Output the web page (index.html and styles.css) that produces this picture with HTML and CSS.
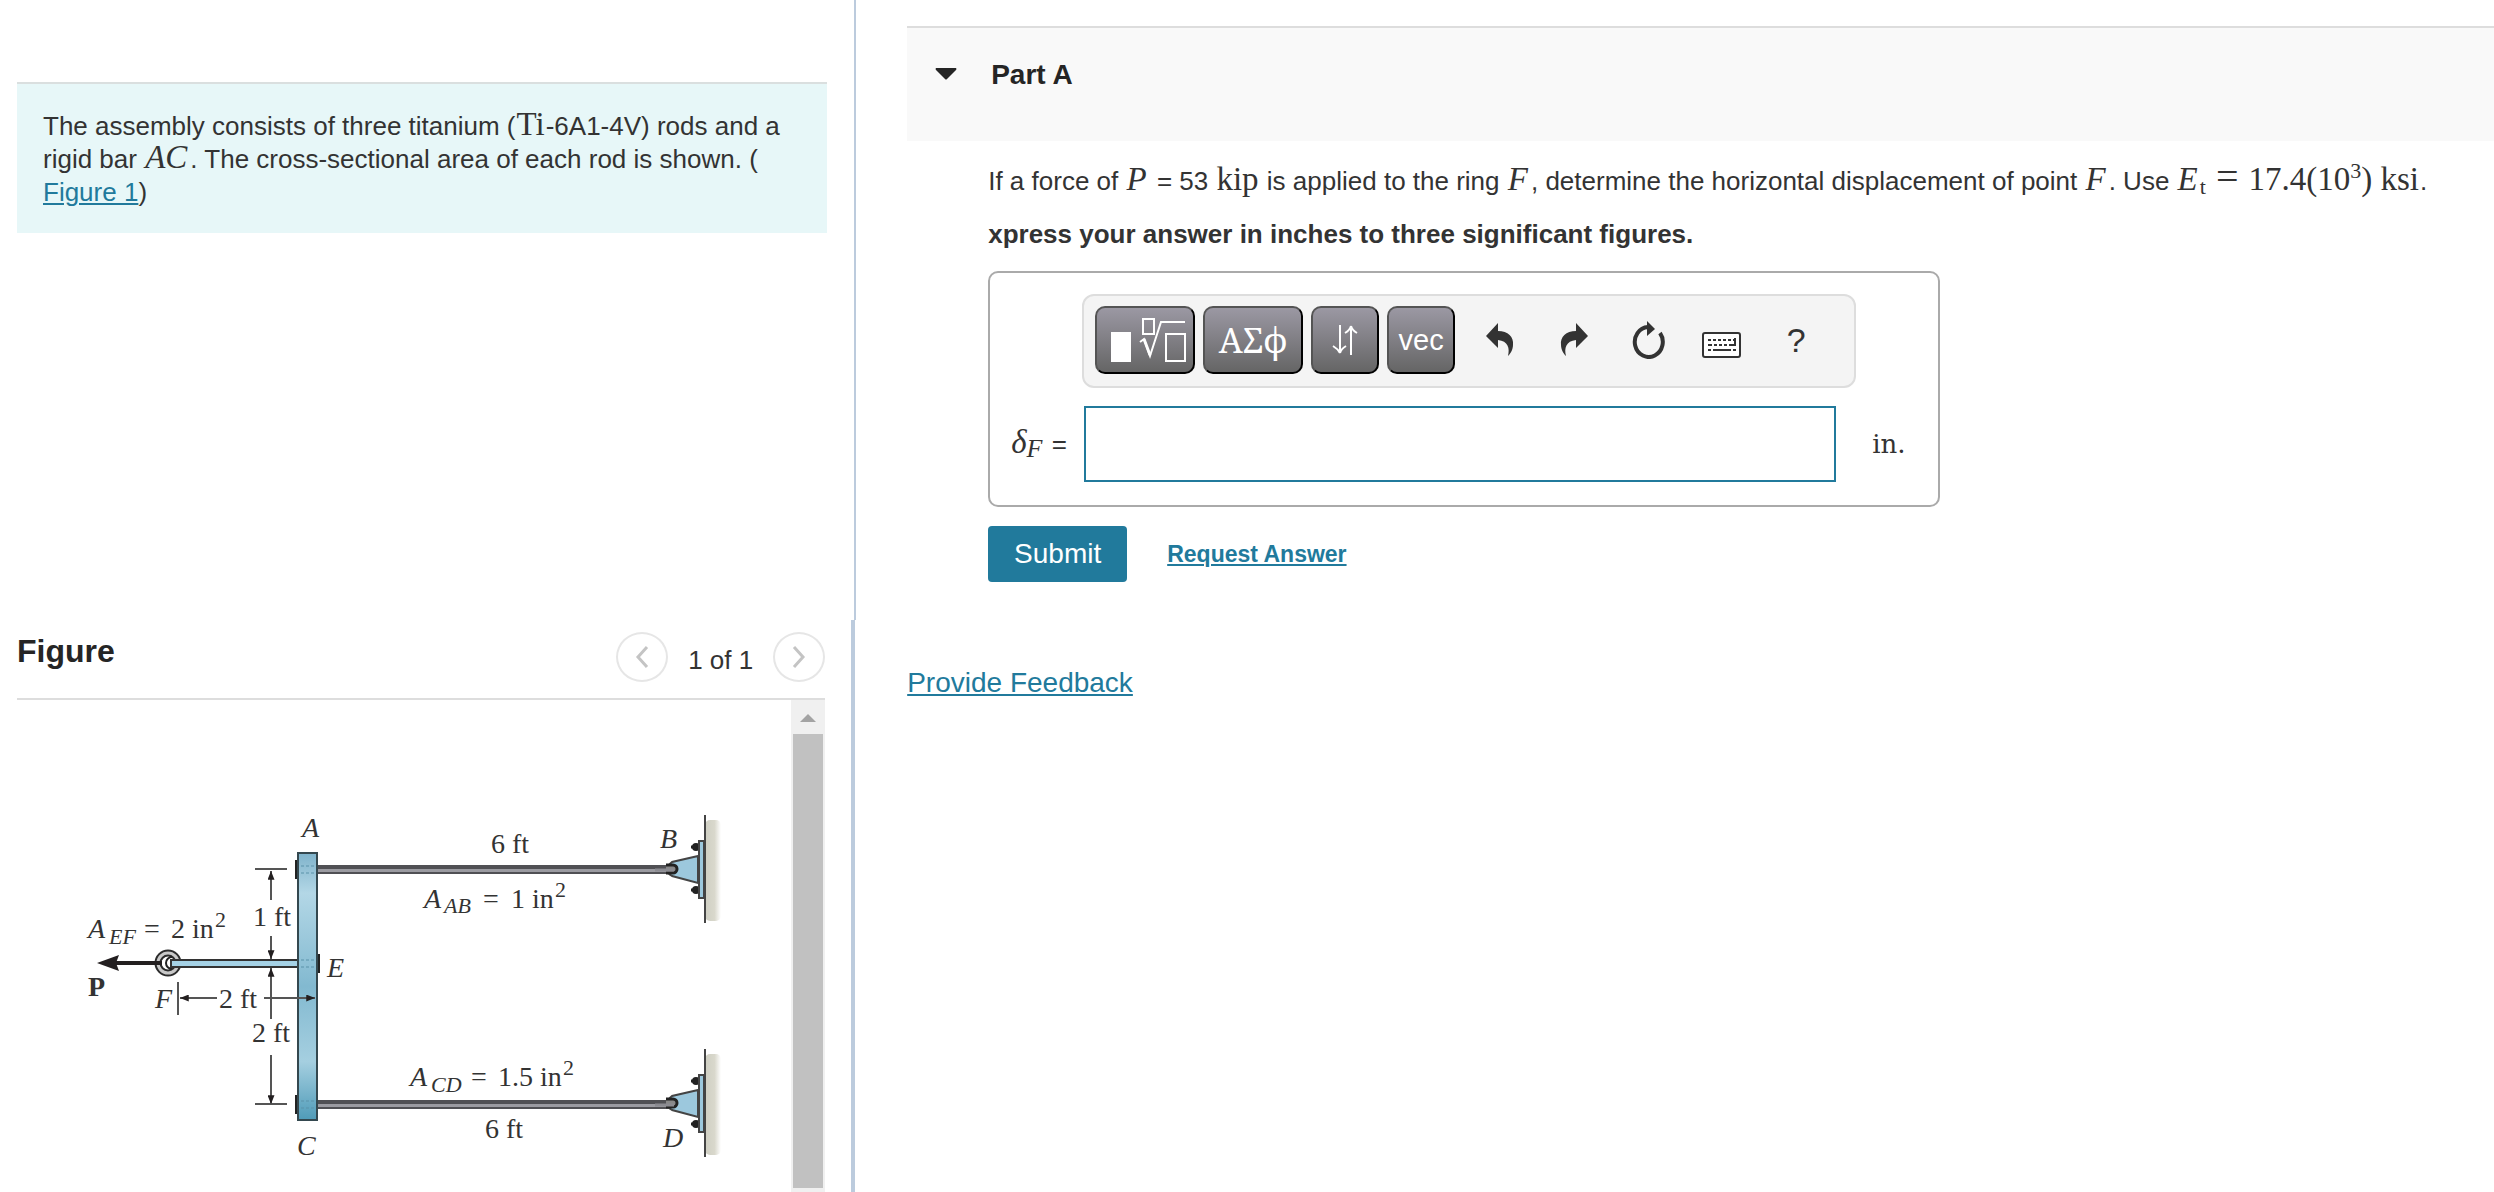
FILE: index.html
```html
<!DOCTYPE html>
<html lang="en">
<head>
    <meta charset="UTF-8">
    <meta name="viewport" content="width=device-width, initial-scale=1.0">
    <title>Part A - Axial Displacement</title>
    <link rel="stylesheet" href="styles.css">
</head>
<body>
    <aside class="left">
        <section class="intro">
            <p class="problem">The assembly consists of three titanium (<span class="math">Ti</span>-6A1-4V) rods and a rigid bar <span class="math"><i>AC</i></span>. The cross-sectional area of each rod is shown. (<br><a href="#figure">Figure 1</a>)</p>
        </section>

        <section class="figure" id="figure">
            <div class="figure-head">
                <h2>Figure</h2>
                <div class="pager">
                    <button aria-label="Previous figure"><svg width="14" height="22" viewBox="0 0 14 22"><path d="M12 1 L3 11 L12 21"/></svg></button>
                    <span>1 of 1</span>
                    <button aria-label="Next figure"><svg width="14" height="22" viewBox="0 0 14 22"><path d="M2 1 L11 11 L2 21"/></svg></button>
                </div>
            </div>
            <div class="figure-body">
                <svg class="drawing" viewBox="17 700 774 492" width="774" height="492">
                    <defs>
                        <linearGradient id="bar" x1="0" y1="0" x2="0" y2="1">
                            <stop offset="0" stop-color="#7fb3cb"/>
                            <stop offset="0.15" stop-color="#b3d7e6"/>
                            <stop offset="0.5" stop-color="#82b9d0"/>
                            <stop offset="0.78" stop-color="#a5cfe0"/>
                            <stop offset="1" stop-color="#4f9bb8"/>
                        </linearGradient>
                        <linearGradient id="wall">
                            <stop offset="0" stop-color="#cfcfc3"/>
                            <stop offset="0.6" stop-color="#d9d8cc"/>
                            <stop offset="1" stop-color="#fff"/>
                        </linearGradient>
                        <marker id="arrow" viewBox="0 0 10 8" markerWidth="10" markerHeight="7" refX="10" refY="4" orient="auto-start-reverse" markerUnits="userSpaceOnUse">
                            <path d="M0 0 L10 4 L0 8 Z" fill="#231f20"/>
                        </marker>
                        <g id="support">
                            <rect x="705" y="820" width="16" height="101" rx="5" fill="url(#wall)"/>
                            <path d="M705 815 V923" stroke="#444" stroke-width="2"/>
                            <circle cx="696" cy="847" r="4" fill="#222"/>
                            <circle cx="696" cy="890" r="4" fill="#222"/>
                            <path d="M691 847 H700 M691 890 H700" stroke="#222" stroke-width="3"/>
                            <rect x="699" y="841" width="5" height="57" fill="#9cc8dd" stroke="#444" stroke-width="2"/>
                            <path d="M698 856 L672 862 Q662 870 672 876 L698 883 Z" fill="#9cc8dd" stroke="#444" stroke-width="2"/>
                            <path d="M666 865 H673 A4 4 0 0 1 673 873 H666" fill="#888" stroke="#222" stroke-width="3"/>
                        </g>
                    </defs>

                    <!-- rods AB and CD -->
                    <g id="rods">
                        <rect x="317" y="865" width="354" height="9" fill="#505054"/>
                        <rect x="317" y="869" width="358" height="3" fill="#9b9ba1"/>
                        <rect x="317" y="1100" width="354" height="9" fill="#505054"/>
                        <rect x="317" y="1104" width="358" height="3" fill="#9b9ba1"/>
                    </g>
                    <use href="#support"/>
                    <use href="#support" y="234"/>
                    <path d="M655 870 H674 M655 1105 H674" stroke="#8b8b91" stroke-width="3"/>

                    <!-- ring F and rod EF -->
                    <circle cx="168" cy="963" r="10" fill="none" stroke="#2b2b2b" stroke-width="7"/>
                    <circle cx="168" cy="963" r="10" fill="none" stroke="#c8c8c8" stroke-width="3"/>
                    <path d="M172 957 A6 6 0 1 0 172 969" fill="#fff" stroke="#222" stroke-width="2"/>
                    <rect x="171" y="960" width="127" height="7" fill="#a5d2e6" stroke="#333" stroke-width="2"/>
                    <path d="M112 963 H162" stroke="#231f20" stroke-width="4"/>
                    <path d="M97 963 L119 955 L116 963 L119 971 Z" fill="#231f20"/>

                    <!-- rigid bar AC -->
                    <path d="M297 860 V879 M297 1095 V1114 M318 954 V973" stroke="#222" stroke-width="4"/>
                    <rect x="298" y="853" width="19" height="267" fill="url(#bar)" stroke="#34484f" stroke-width="2"/>
                    <path d="M301 866 H315 M301 873 H315 M301 960 H315 M301 967 H315 M301 1101 H315 M301 1108 H315" stroke="#5b93aa" stroke-width="1" stroke-dasharray="3 2"/>

                    <g class="dims">
                        <path d="M255 869 H287 M255 1104 H287 M178 982 V1015"/>
                        <path d="M271 900 V871" marker-end="url(#arrow)"/>
                        <path d="M271 936 V959" marker-end="url(#arrow)"/>
                        <path d="M271 1019 V968" marker-end="url(#arrow)"/>
                        <path d="M271 1055 V1104" marker-end="url(#arrow)"/>
                        <path d="M217 998 H180" marker-end="url(#arrow)"/>
                        <path d="M264 998 H315" marker-end="url(#arrow)"/>
                    </g>

                    <g class="labels">
                        <text x="302" y="837" class="it">A</text>
                        <text x="297" y="1155" class="it">C</text>
                        <text x="327" y="977" class="it">E</text>
                        <text x="155" y="1008" class="it">F</text>
                        <text x="660" y="848" class="it">B</text>
                        <text x="663" y="1147" class="it">D</text>
                        <text x="88" y="996" class="bold">P</text>
                        <text x="253" y="926">1 ft</text>
                        <text x="219" y="1008">2 ft</text>
                        <text x="252" y="1042">2 ft</text>
                        <text x="491" y="853">6 ft</text>
                        <text x="485" y="1138">6 ft</text>
                        <text x="88" y="938" class="it">A</text>
                        <text x="109" y="944" class="it sub">EF</text>
                        <text x="144" y="938">=</text>
                        <text x="171" y="938">2 in</text>
                        <text x="215" y="927" class="sub">2</text>
                        <text x="424" y="908" class="it">A</text>
                        <text x="444" y="913" class="it sub">AB</text>
                        <text x="483" y="908">=</text>
                        <text x="511" y="908">1 in</text>
                        <text x="555" y="897" class="sub">2</text>
                        <text x="410" y="1086" class="it">A</text>
                        <text x="431" y="1092" class="it sub">CD</text>
                        <text x="471" y="1086">=</text>
                        <text x="498" y="1086">1.5 in</text>
                        <text x="563" y="1075" class="sub">2</text>
                    </g>
                </svg>
                <div class="scrollbar">
                    <div class="up"></div>
                    <div class="thumb"></div>
                </div>
            </div>
        </section>
    </aside>

    <main class="right">
        <header class="part">
            <svg width="22" height="12" viewBox="0 0 22 12"><path d="M1 0 H21 Q22 1 21 2 L12 11 Q11 12 10 11 L1 2 Q0 1 1 0 Z" fill="#252525"/></svg>
            <h1>Part A</h1>
        </header>

        <section class="question">
            <p>If a force of <span class="math"><i>P</i></span> = 53 <span class="math">kip</span> is applied to the ring <span class="math"><i>F</i></span>, determine the horizontal displacement of point <span class="math"><i>F</i></span>. Use <span class="math"><i>E</i><sub>t</sub><span class="eq">=</span>17.4(10<sup>3</sup>) ksi</span>.</p>
            <p class="hint">xpress your answer in inches to three significant figures.</p>

            <form class="answer">
                <div class="toolbar">
                    <button type="button" class="key wide" aria-label="Templates">
                        <svg width="82" height="46" viewBox="-6 0 82 46">
                            <rect x="1" y="15" width="20" height="30" fill="#fff"/>
                            <g fill="none" stroke="#fff" stroke-width="2">
                                <rect x="33" y="2" width="11" height="15"/>
                                <rect x="56" y="17" width="19" height="27"/>
                                <path d="M30 25 L34 22 L40 39 L51 5 H75"/>
                                <path d="M34 22 L40 38" stroke-width="3"/>
                            </g>
                        </svg>
                    </button>
                    <button type="button" class="key wide greek">ΑΣϕ</button>
                    <button type="button" class="key" aria-label="Scripts">
                        <svg width="26" height="32" viewBox="0 0 26 32" fill="none" stroke="#fff" stroke-width="2"><path d="M8 1 V29 M1 22 Q6 25 8 29 M14 22 Q9 25 8 29 M19 31 V3 M13 9 Q18 6 19 2 M25 9 Q20 6 19 2"/></svg>
                    </button>
                    <button type="button" class="key">vec</button>
                    <div class="tools">
                        <button type="button" aria-label="Undo"><svg width="28" height="34" viewBox="0 0 28 34"><path d="M0 13 L12 0 V8 C22 8 28 14 27 22 C27 27 24 31 22 33 C24 25 22 18 12 17 V25 Z"/></svg></button>
                        <button type="button" aria-label="Redo"><svg width="28" height="34" viewBox="0 0 28 34"><path d="M28 13 L16 0 V8 C6 8 0 14 1 22 C1 27 4 31 6 33 C4 25 6 18 16 17 V25 Z"/></svg></button>
                        <button type="button" aria-label="Reset"><svg width="34" height="38" viewBox="0 0 34 38"><path d="M17 6 A14 15 0 1 0 29 12" fill="none" stroke="#333" stroke-width="4"/><path d="M16 0 L24 8 L16 15 Z"/></svg></button>
                        <button type="button" aria-label="Keyboard"><svg class="keyboard" width="40" height="26" viewBox="0 0 40 26"><rect x="1" y="1" width="37" height="24" rx="2" fill="#fff" stroke="#333" stroke-width="2"/><path d="M6 8 H32 M6 18 H9 M31 18 H34" fill="none" stroke="#333" stroke-width="2" stroke-dasharray="3 2"/><path d="M6 13 H10 M12 13 H15 M17 13 H20 M22 13 H25 M27 13 H33 V6 M11 18 H29" fill="none" stroke="#333" stroke-width="2"/></svg></button>
                        <button type="button" class="help">?</button>
                    </div>
                </div>
                <div class="entry">
                    <label for="delta"><span class="var"><i>δ</i><sub><i>F</i></sub></span> =</label>
                    <input type="text" id="delta">
                    <span class="unit">in.</span>
                </div>
            </form>

            <div class="actions">
                <button class="submit">Submit</button>
                <a href="#">Request Answer</a>
            </div>
        </section>

        <a class="feedback" href="#">Provide Feedback</a>
    </main>
</body>
</html>
```

FILE: styles.css
```css
* { box-sizing: border-box; }

body {
    margin: 0;
    min-height: 100vh;
    display: grid;
    grid-template-columns: 34.33% 1fr;
    font-family: "Liberation Sans", Arial, sans-serif;
    font-size: 26px;
    line-height: 33px;
    color: #333;
    background: #fff;
}

h1, h2, p { margin: 0; }
a { color: #217a9c; text-underline-offset: 2px; text-decoration-thickness: 2px; }
button { font-family: inherit; cursor: pointer; }

.math { font-family: "Liberation Serif", "Times New Roman", serif; font-size: 33px; line-height: 1px; margin: 0 1px; }
.math i { margin-right: 2px; }

/* left column */
.left { display: grid; grid-template-rows: 52vh 1fr; height: 100vh; }
.intro { padding: 82px 27px 0 17px; border-right: 2px solid #bccbdd; }
.problem { background: #e7f7f8; border-top: 2px solid #dadfdf; padding: 26px; height: 151px; padding-right: 16px; }

.figure { display: flex; flex-direction: column; margin-right: 1px; padding: 0 26px 0 17px; border-right: 4px solid #bccbdd; overflow: hidden; }
.figure-head { display: flex; justify-content: space-between; height: 80px; padding-top: 12px; border-bottom: 2px solid #ddd; flex-shrink: 0; }
.figure-head h2 { font-size: 32px; line-height: 38px; color: #252525; }
.pager { display: flex; align-items: center; gap: 20px; height: 50px; }
.pager span { padding-top: 8px; }
.pager button { width: 52px; height: 50px; padding: 0; border: 2px solid #e6e6e6; border-radius: 50%; background: #fff; display: flex; align-items: center; justify-content: center; }
.pager path { fill: none; stroke: #c4c4c4; stroke-width: 3; }
.figure-body { display: flex; justify-content: space-between; flex: 1; min-height: 0; overflow: hidden; }
.drawing { flex-shrink: 0; }
.scrollbar { width: 34px; background: #f0f0f0; display: flex; flex-direction: column; align-items: center; padding-bottom: 4px; }
.up { height: 34px; padding-top: 14px; }
.up::before { content: ""; display: block; border: 8px solid transparent; border-top: 0; border-bottom-color: #a3a3a3; }
.thumb { width: 30px; flex: 1; background: #c1c1c1; }

.labels text { font-family: "Liberation Serif", "Times New Roman", serif; font-size: 28px; fill: #333; }
.labels .it { font-style: italic; }
.labels .bold { font-weight: bold; }
.labels .sub { font-size: 22px; }
.dims path { fill: none; stroke: #555; stroke-width: 2; }

/* right column */
.right { padding: 26px 0 0 51px; }
.part { display: flex; gap: 34px; height: 115px; padding: 30px 28px; background: #f9f9f9; border-top: 2px solid #ddd; }
.part svg { margin-top: 10px; }
.part h1 { font-size: 28px; color: #252525; }

.question { padding: 24px 0 0 81px; }
.question p { margin-bottom: 20px; }
.math sub, .math sup { font-size: 22px; line-height: 1px; }
.math sub, .var sub { vertical-align: -4px; }
.math sup { vertical-align: 12px; }
.question .hint { font-weight: bold; }
.eq { margin: 0 10px; font-size: 40px; }

.answer { max-width: 952px; height: 236px; padding: 21px; border: 2px solid #aaa; border-radius: 10px; }
.toolbar { display: flex; align-items: flex-start; gap: 8px; width: 774px; height: 94px; margin-left: 71px; padding: 10px 0 10px 11px; border: 2px solid #ddd; border-radius: 12px; background: #f4f4f4; }
.key { width: 68px; height: 68px; padding: 0; display: flex; align-items: center; justify-content: center; color: #fff; font-size: 29px; background: linear-gradient(#9b98a3, #656565); border: 2px outset #000; border-radius: 10px; }
.key.wide { width: 100px; }
.greek { font-family: "Noto Serif", "Liberation Serif", serif; font-size: 34px; }
.tools { display: flex; align-items: center; height: 68px; }
.tools button { width: 74px; padding: 0; border: 0; background: none; display: flex; justify-content: center; color: #333; }
.tools path { fill: #333; }
.tools path[fill] { fill: none; }
.keyboard { margin-top: 10px; }
.tools .help { font-size: 34px; line-height: 34px; }

.entry { display: flex; align-items: center; margin-top: 18px; }
.entry label { width: 73px; }
.entry input { flex: 1; min-width: 0; height: 76px; padding: 0 12px; font-size: 28px; border: 2px solid #217a9c; background: #fff; }
.var { font-family: "Liberation Serif", serif; font-size: 33px; line-height: 1px; margin-right: 2px; }
.var sub { font-size: 26px; line-height: 1px; }
.unit { width: 81px; padding-left: 36px; font-family: "DejaVu Serif", serif; }

.actions { display: flex; align-items: center; gap: 40px; margin-top: 19px; }
.submit { width: 139px; height: 56px; border: 0; border-radius: 4px; background: #217a9c; color: #fff; font-size: 28px; }
.actions a { font-size: 23px; font-weight: bold; }
.feedback { display: inline-block; margin-top: 84px; font-size: 28px; }
```
